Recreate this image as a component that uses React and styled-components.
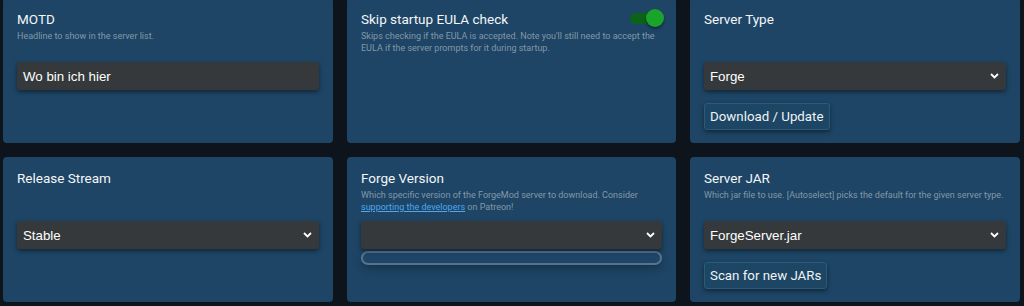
import React from 'react';
import styled, { createGlobalStyle } from 'styled-components';

const GlobalStyle = createGlobalStyle`
    html, body {
        margin: 0;
        padding: 0;
        background: #0e141b;
        font-family: Roboto, 'Liberation Sans', sans-serif;
        overflow: hidden;
    }
`;

const Grid = styled.div`
    display: grid;
    grid-template-columns: 330px 329px 330px;
    grid-auto-rows: 145px;
    column-gap: 14px;
    row-gap: 14px;
    margin: -2px 0 0 3px;
`;

const Card = styled.div`
    background: #1e4565;
    border-radius: 4px;
    padding: 12px 14px;
    box-sizing: border-box;
    color: #fff;
`;

const Header = styled.div`
    position: relative;
    min-height: 52px;
`;

const Title = styled.div`
    font-size: 13.5px;
    line-height: 19px;
    font-weight: 400;
    color: #f4f6f8;
    margin-bottom: 1px;
`;

const Desc = styled.div`
    font-size: 9px;
    line-height: 12px;
    color: rgba(255, 255, 255, 0.45);

    a {
        color: #4fa7ec;
        text-decoration: underline;
    }
`;

const Field = styled.div`
    position: relative;
    height: 28px;
    background: #35393b;
    border-radius: 3px;
    box-shadow: 0 2px 4px rgba(0, 0, 0, 0.45);
    display: flex;
    align-items: center;
    padding: 0 6px;
    font-family: 'Liberation Sans', Arial, sans-serif;
    font-size: 13.3px;
    color: #fff;
`;

const Chevron = styled.svg`
    position: absolute;
    right: 7px;
    top: 11px;
`;

const Button = styled.div`
    display: inline-block;
    margin-top: 13px;
    height: 27px;
    box-sizing: border-box;
    padding: 0 5px;
    line-height: 25px;
    font-size: 13.3px;
    color: #f0f3f5;
    background: #1c4664;
    border: 1px solid #2c5a7c;
    border-radius: 3px;
    box-shadow: 0 2px 4px rgba(0, 0, 0, 0.45);
`;

const Outline = styled.div`
    margin-top: 2px;
    height: 14px;
    box-sizing: border-box;
    border: 2px solid rgba(150, 170, 190, 0.45);
    border-radius: 7px;
    box-shadow: 0 4px 8px rgba(0, 0, 0, 0.25);
`;

const Toggle = styled.div`
    position: absolute;
    right: -2px;
    top: -1px;
    width: 34px;
    height: 18px;
`;

const Track = styled.div`
    position: absolute;
    left: 0;
    top: 4px;
    width: 28px;
    height: 11px;
    border-radius: 6px;
    background: #0d6219;
`;

const Thumb = styled.div`
    position: absolute;
    right: 0;
    top: 0;
    width: 18px;
    height: 18px;
    border-radius: 50%;
    background: #1ba42b;
    box-shadow: 0 2px 3px rgba(0, 0, 0, 0.4);
`;

const Select = ({ value }) => (
    <Field>
        {value}
        <Chevron width="9" height="6" viewBox="0 0 9 6">
            <path d="M1 1l3.5 3.5L8 1" stroke="#fff" strokeWidth="1.8" fill="none" />
        </Chevron>
    </Field>
);

export default function App() {
    return (
        <>
            <GlobalStyle />
            <Grid>
                <Card>
                    <Header>
                        <Title>MOTD</Title>
                        <Desc>Headline to show in the server list.</Desc>
                    </Header>
                    <Field>Wo bin ich hier</Field>
                </Card>
                <Card>
                    <Header>
                        <Title>Skip startup EULA check</Title>
                        <Toggle>
                            <Track />
                            <Thumb />
                        </Toggle>
                        <Desc>
                            Skips checking if the EULA is accepted. Note you'll still need to accept the EULA if the
                            server prompts for it during startup.
                        </Desc>
                    </Header>
                </Card>
                <Card>
                    <Header>
                        <Title>Server Type</Title>
                    </Header>
                    <Select value="Forge" />
                    <Button>Download / Update</Button>
                </Card>
                <Card>
                    <Header>
                        <Title>Release Stream</Title>
                    </Header>
                    <Select value="Stable" />
                </Card>
                <Card>
                    <Header>
                        <Title>Forge Version</Title>
                        <Desc>
                            Which specific version of the ForgeMod server to download. Consider{' '}
                            <a>supporting the developers</a> on Patreon!
                        </Desc>
                    </Header>
                    <Select value="" />
                    <Outline />
                </Card>
                <Card>
                    <Header>
                        <Title>Server JAR</Title>
                        <Desc>Which jar file to use. [Autoselect] picks the default for the given server type.</Desc>
                    </Header>
                    <Select value="ForgeServer.jar" />
                    <Button>Scan for new JARs</Button>
                </Card>
            </Grid>
        </>
    );
}
